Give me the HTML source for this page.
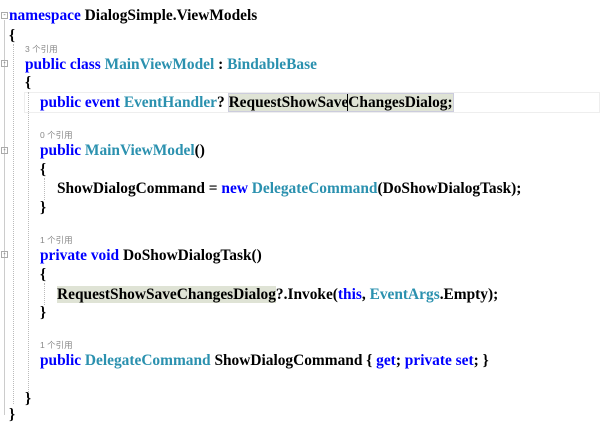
<!DOCTYPE html>
<html><head><meta charset="utf-8"><style>
body{margin:0;width:600px;height:428px;background:#fff;position:relative;overflow:hidden;font-family:"Liberation Serif",serif;font-weight:bold;font-size:15.4px;color:#000}
.l{position:absolute;white-space:pre;line-height:19px}
.k{color:#0000ff}.t{color:#2b91af}
.c{position:absolute;font-family:"Liberation Sans","Noto Sans CJK SC",sans-serif;font-weight:normal;font-size:8.5px;color:#888;line-height:10px}
.g{position:absolute;border-left:1px dotted #bbb;width:0}
.f{position:absolute;left:1px;width:7px;height:7px;border:1px solid #aaa;box-sizing:border-box;font-size:7px;line-height:5px;text-align:center;color:#666;font-family:sans-serif;font-weight:normal}
.hl{background:#dfe3d5}
</style></head><body>
<div style="position:absolute;left:24px;top:92px;width:576px;height:21px;border:1px solid #eee;box-sizing:border-box"></div>
<div class="g" style="left:13px;top:44px;height:360px"></div>
<div class="g" style="left:28px;top:92px;height:300px"></div>
<div class="g" style="left:44px;top:178px;height:22px"></div>
<div class="g" style="left:44px;top:283px;height:22px"></div>
<div style="position:absolute;left:4px;top:20px;width:1px;height:395px;background:#ccc"></div>
<div class="f" style="top:12px">-</div>
<div class="f" style="top:60px">-</div>
<div class="f" style="top:147px">-</div>
<div class="f" style="top:251px">-</div>
<div class="l" style="left:9px;top:6px"><span class="k">namespace</span> DialogSimple.ViewModels</div>
<div class="l" style="left:9px;top:26px">{</div>
<div class="c" style="left:25px;top:44px">3 个引用</div>
<div class="l" style="left:25px;top:55px"><span class="k">public class</span> <span class="t">MainViewModel</span> : <span class="t">BindableBase</span></div>
<div class="l" style="left:25px;top:73px">{</div>
<div class="l" style="left:40px;top:93px"><span class="k">public event</span> <span class="t">EventHandler</span>? <span class="hl" style="outline:1px solid #ccd">RequestShowSave<span style="border-left:1px solid #000;margin-left:-1px"></span>ChangesDialog;</span></div>
<div class="c" style="left:40px;top:130px">0 个引用</div>
<div class="l" style="left:40px;top:141px"><span class="k">public</span> <span class="t">MainViewModel</span>()</div>
<div class="l" style="left:40px;top:160px">{</div>
<div class="l" style="left:57px;top:179px">ShowDialogCommand = <span class="k">new</span> <span class="t">DelegateCommand</span>(DoShowDialogTask);</div>
<div class="l" style="left:40px;top:198px">}</div>
<div class="c" style="left:40px;top:235px">1 个引用</div>
<div class="l" style="left:40px;top:246px"><span class="k">private void</span> DoShowDialogTask()</div>
<div class="l" style="left:40px;top:265px">{</div>
<div class="l" style="left:57px;top:285px"><span class="hl">RequestShowSaveChangesDialog</span>?.Invoke(<span class="k">this</span>, <span class="t">EventArgs</span>.Empty);</div>
<div class="l" style="left:40px;top:303px">}</div>
<div class="c" style="left:40px;top:340px">1 个引用</div>
<div class="l" style="left:40px;top:351px"><span class="k">public</span> <span class="t">DelegateCommand</span> ShowDialogCommand { <span class="k">get</span>; <span class="k">private set</span>; }</div>
<div class="l" style="left:25px;top:389px">}</div>
<div class="l" style="left:9px;top:405px">}</div>
</body></html>
